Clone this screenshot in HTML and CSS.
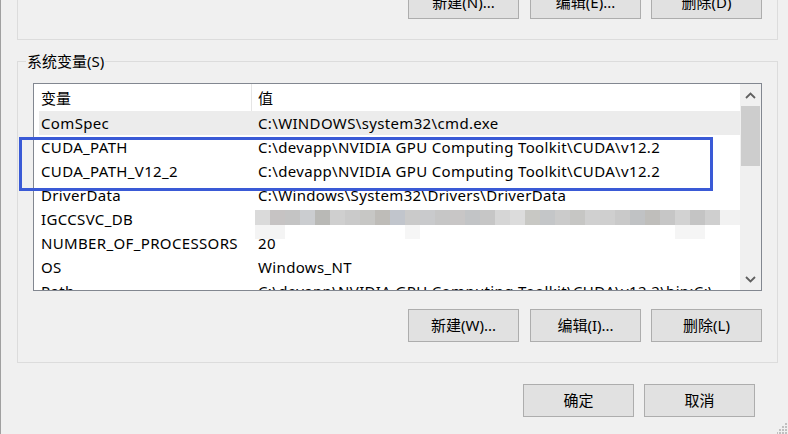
FILE: index.html
```html
<!DOCTYPE html>
<html lang="zh-CN">
<head>
<meta charset="utf-8">
<title>环境变量</title>
<link rel="stylesheet" href="styles.css">
</head>
<body>
<div class="window">
  <div class="group group-top">
    <div class="btn-row btn-row-top">
      <button class="btn">新建(N)...</button>
      <button class="btn b2">编辑(E)...</button>
      <button class="btn b3">删除(D)</button>
    </div>
  </div>

  <div class="group group-sys">
    <div class="legend">系统变量(S)</div>
    <div class="listview">
      <div class="lv-body">
        <div class="lv-header">
          <div class="c1">变量</div>
          <div class="c2 hsep">值</div>
        </div>
        <div class="lv-row sel"><div class="c1">ComSpec</div><div class="c2">C:\WINDOWS\system32\cmd.exe</div></div>
        <div class="lv-row"><div class="c1">CUDA_PATH</div><div class="c2">C:\devapp\NVIDIA GPU Computing Toolkit\CUDA\v12.2</div></div>
        <div class="lv-row"><div class="c1">CUDA_PATH_V12_2</div><div class="c2">C:\devapp\NVIDIA GPU Computing Toolkit\CUDA\v12.2</div></div>
        <div class="lv-row"><div class="c1">DriverData</div><div class="c2">C:\Windows\System32\Drivers\DriverData</div></div>
        <div class="lv-row"><div class="c1">IGCCSVC_DB</div><div class="c2"><div class="mosaic"><div class="m-band"></div><div class="m-soft"></div></div></div></div>
        <div class="lv-row"><div class="c1">NUMBER_OF_PROCESSORS</div><div class="c2">20</div></div>
        <div class="lv-row"><div class="c1">OS</div><div class="c2">Windows_NT</div></div>
        <div class="lv-row"><div class="c1">Path</div><div class="c2">C:\devapp\NVIDIA GPU Computing Toolkit\CUDA\v12.2\bin;C:\</div></div>
      </div>
      <div class="scrollbar">
        <div class="sb-arrow">
          <svg width="11" height="7" viewBox="0 0 11 7"><polyline points="1,6 5.5,1.5 10,6" fill="none" stroke="#606060" stroke-width="1.8"/></svg>
        </div>
        <div class="sb-thumb"></div>
        <div class="sb-track"></div>
        <div class="sb-arrow">
          <svg width="11" height="7" viewBox="0 0 11 7"><polyline points="1,1 5.5,5.5 10,1" fill="none" stroke="#606060" stroke-width="1.8"/></svg>
        </div>
      </div>
    </div>
    <div class="btn-row btn-row-sys">
      <button class="btn">新建(W)...</button>
      <button class="btn b2">编辑(I)...</button>
      <button class="btn b3">删除(L)</button>
    </div>
  </div>

  <div class="dialog-buttons">
    <button class="btn">确定</button>
    <button class="btn">取消</button>
  </div>

  <div class="highlight-box"></div>
  <svg class="grip" width="11" height="11" viewBox="0 0 11 11">
    <rect x="8" y="0" width="2" height="2" fill="#c0c0c0"/>
    <rect x="5" y="3" width="2" height="2" fill="#c0c0c0"/>
    <rect x="8" y="3" width="2" height="2" fill="#c0c0c0"/>
    <rect x="2" y="6" width="2" height="2" fill="#c0c0c0"/>
    <rect x="5" y="6" width="2" height="2" fill="#c0c0c0"/>
    <rect x="8" y="6" width="2" height="2" fill="#c0c0c0"/>
    <rect x="-1" y="9" width="2" height="2" fill="#c0c0c0"/>
    <rect x="2" y="9" width="2" height="2" fill="#c0c0c0"/>
    <rect x="5" y="9" width="2" height="2" fill="#c0c0c0"/>
    <rect x="8" y="9" width="2" height="2" fill="#c0c0c0"/>
  </svg>
</div>
</body>
</html>
```

FILE: styles.css
```css
* { box-sizing: border-box; }
html, body {
  margin: 0;
  padding: 0;
  background: #f0f0f0;
}
body {
  width: 788px;
  height: 434px;
  overflow: hidden;
  font-family: "Noto Sans", "Noto Sans CJK SC", sans-serif;
  font-size: 15px;
  color: #000;
}
.window {
  position: relative;
  display: flow-root;
  width: 788px;
  height: 434px;
  border-left: 1px solid #a0a0a0;
  overflow: hidden;
}
.group {
  margin-left: 16px;
  width: 761px;
  border: 1px solid #dcdcdc;
}
.group-top {
  display: flow-root;
  height: 40px;
  border-top: none;
}
.btn-row {
  display: flex;
  justify-content: flex-end;
  padding-right: 15px;
}
.btn-row-top { margin-top: -14px; }
.btn-row-sys { margin-top: 18px; }
.btn {
  width: 111px;
  height: 33px;
  border: 1px solid #adadad;
  background: #e1e1e1;
  font-family: "Noto Sans", "Noto Sans CJK SC", sans-serif;
  font-size: 15px;
  color: #000;
  padding: 0;
  line-height: 31px;
  text-align: center;
}
.b2 { margin-left: 11px; }
.b3 { margin-left: 10px; }

.group-sys {
  display: flow-root;
  margin-top: 21px;
  height: 302px;
}
.legend {
  display: block;
  width: fit-content;
  margin-top: -11px;
  margin-left: 8px;
  padding: 0 1px;
  line-height: 20px;
  height: 20px;
  background: #f0f0f0;
}
.listview {
  display: flex;
  margin-left: 15px;
  margin-top: 12px;
  width: 729px;
  height: 208px;
  border: 1px solid #828790;
  background: #fff;
}
.lv-body {
  flex: 1;
  overflow: hidden;
  letter-spacing: 0.35px;
}
.lv-header, .lv-row {
  display: flex;
  white-space: nowrap;
}
.lv-header {
  height: 27px;
  line-height: 28px;
  letter-spacing: 0;
}
.lv-header .c1 { padding-left: 7px; }
.lv-row {
  height: 24px;
  line-height: 24px;
  margin-left: 5px;
}
.c1 {
  width: 217px;
  flex: none;
  padding-left: 2px;
}
.lv-row .c2 { padding-left: 7px; }
.lv-header .c1 { width: 217px; }
.hsep {
  border-left: 1px solid #e5e5e5;
  padding-left: 6px;
  flex: 1;
}
.lv-row.sel { background: #ececec; }
.lv-row .c1 { width: 212px; }

.mosaic {
  margin-left: -3px;
  padding-top: 3px;
}
.m-band {
  width: 486px;
  height: 15px;
  background: linear-gradient(90deg,
    #dadada 0 15px, #c6c3c3 15px 30px, #c4c4c4 30px 45px, #cbcdd0 45px 60px,
    #b9b9b6 60px 75px, #cfcfcf 75px 90px, #cacaca 90px 105px, #c7c7c5 105px 120px,
    #bebcb8 120px 135px, #c1c5cc 135px 150px, #cacaca 150px 165px, #c9cacc 165px 180px,
    #c6c6c6 180px 195px, #c8c6c6 195px 210px, #c2c4c6 210px 225px, #c6c6c6 225px 240px,
    #d6d6d6 240px 255px, #dcdcdc 255px 270px, #c8c8c4 270px 285px, #c4c6c8 285px 300px,
    #cbcbcb 300px 315px, #c6c6c4 315px 330px, #d0d0d0 330px 345px, #cfcfcf 345px 360px,
    #c9c9c9 360px 375px, #c0c2c4 375px 390px, #bfbebb 390px 405px, #c6c6c6 405px 420px,
    #d2d2d2 420px 435px, #c4c4c4 435px 450px, #cfcfcf 450px 465px, #f2f2f2 465px 486px);
}
.m-soft {
  width: 486px;
  height: 14px;
  background: linear-gradient(90deg,
    #f4f4f4 0 30px, transparent 30px 150px, #f6f6f6 150px 165px, transparent 165px 420px,
    #f5f5f5 420px 450px, transparent 450px);
}

.scrollbar {
  width: 21px;
  flex: none;
  background: #f0f0f0;
  display: flex;
  flex-direction: column;
  align-items: center;
}
.sb-arrow {
  height: 22px;
  width: 21px;
  display: flex;
  align-items: center;
  justify-content: center;
}
.sb-thumb {
  width: 19px;
  height: 60px;
  background: #cdcdcd;
}
.sb-track { flex: 1; }

.dialog-buttons {
  display: flex;
  justify-content: flex-end;
  gap: 10px;
  margin-top: 21px;
  padding-right: 33px;
}

.highlight-box {
  position: absolute;
  left: 18px;
  top: 137px;
  width: 694px;
  height: 54px;
  border: 3px solid #3a5ad6;
}
.grip {
  position: absolute;
  right: 0;
  bottom: 0;
}
```
